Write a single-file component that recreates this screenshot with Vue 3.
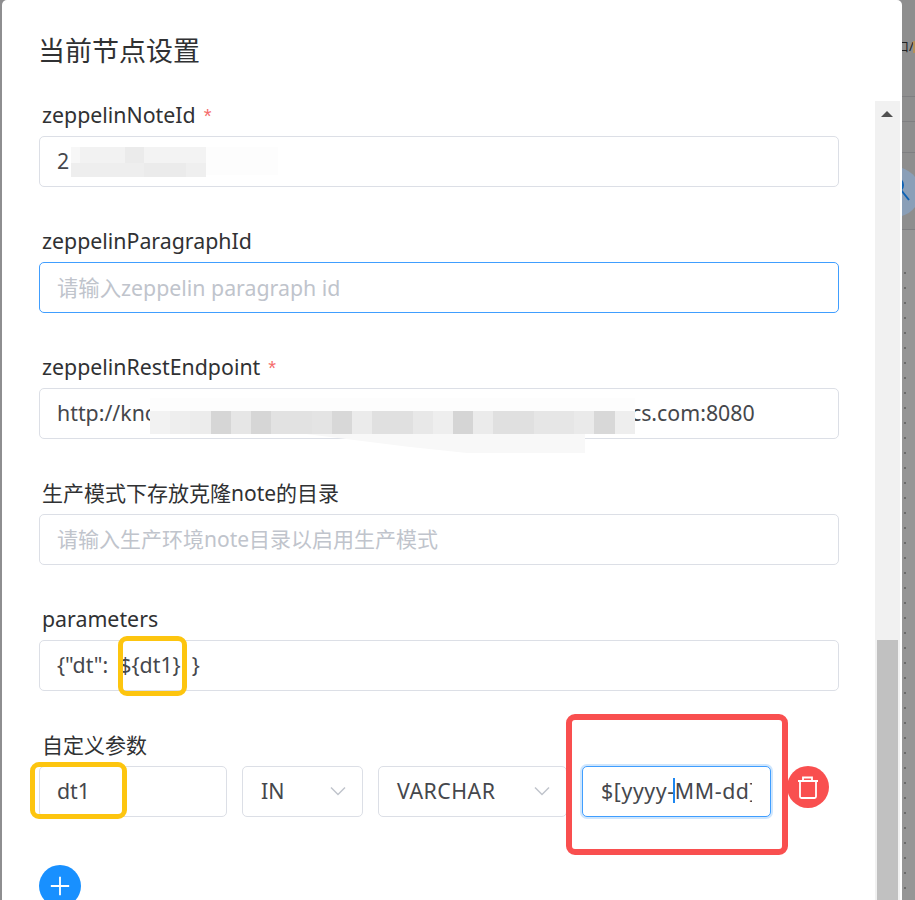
<template>
  <div class="page">
    <div class="modal">
      <div class="modal-title">当前节点设置</div>
      <div class="modal-body">
        <div class="form">
          <div v-for="f in fields" :key="f.label" class="form-item" :class="{ cjk: f.cjk }">
            <div class="label">
              {{ f.label }}<span v-if="f.required" class="star">*</span>
            </div>
            <input
              class="input"
              :class="{ focused: f.focused }"
              :value="f.value"
              :placeholder="f.placeholder"
            >
          </div>

          <div class="label cjk">自定义参数</div>
          <div class="param-row">
            <input class="input param-name" value="dt1">
            <div class="select select-dir">
              <span>IN</span>
              <svg class="chevron" viewBox="0 0 16 10"><path d="M1 1.5 8 8.5 15 1.5" /></svg>
            </div>
            <div class="select select-type">
              <span>VARCHAR</span>
              <svg class="chevron" viewBox="0 0 16 10"><path d="M1 1.5 8 8.5 15 1.5" /></svg>
            </div>
            <div class="param-value">
              <input class="input focused ring" value="$[yyyy-MM-dd]">
              <span class="caret"></span>
            </div>
            <button class="round-btn delete-btn">
              <svg viewBox="0 0 24 24" width="24" height="24">
                <path d="M2 6h20M7 6V2.5h9V6M4 6v15.5a1.5 1.5 0 0 0 1.5 1.5h13a1.5 1.5 0 0 0 1.5-1.5V6" />
              </svg>
            </button>
          </div>
          <button class="round-btn add-btn">
            <svg viewBox="0 0 24 24" width="22" height="22">
              <path d="M12 2v20M2 12h20" />
            </svg>
          </button>
        </div>

        <div class="scrollbar">
          <div class="arrow"></div>
          <div class="thumb"></div>
        </div>
      </div>
    </div>

    <div class="backdrop">
      <span class="bg-text">口/</span>
      <div class="bg-mark"></div>
      <div class="bg-line" v-for="y in [96, 121, 152, 229]" :key="y" :style="{ top: y + 'px' }"></div>
      <div class="bg-circle">
        <svg viewBox="0 0 50 50" width="50" height="50">
          <circle cx="26" cy="18" r="7" />
          <path d="M31 23 39 33" />
        </svg>
      </div>
      <div class="dots">
        <i v-for="n in 42" :key="n"></i>
      </div>
    </div>

    <!-- blurred out values -->
    <div class="blur blur-note"></div>
    <div class="blur blur-note-faint"></div>
    <div class="blur blur-url-top"></div>
    <div class="blur blur-url-low"></div>
    <div class="blur blur-url">
      <i v-for="(g, i) in urlTiles" :key="i" :style="{ background: g }"></i>
    </div>

    <!-- annotations drawn on the screenshot -->
    <div class="mark mark-yellow mark-param"></div>
    <div class="mark mark-yellow mark-name"></div>
    <div class="mark mark-red"></div>
  </div>
</template>

<script setup>
const fields = [
  { label: 'zeppelinNoteId', required: true, value: '2' },
  { label: 'zeppelinParagraphId', placeholder: '请输入zeppelin paragraph id', focused: true },
  { label: 'zeppelinRestEndpoint', required: true, value: 'http://knox..xxxxxxxxxxxxxxxxxxxxxxxxxxxxxxxxxxxxxxxxcs.com:8080' },
  { label: '生产模式下存放克隆note的目录', placeholder: '请输入生产环境note目录以启用生产模式', cjk: true },
  { label: 'parameters', value: '{"dt":  ${dt1}  }' }
]

const urlTiles = [
  '#f2f2f2', '#eeeeee', '#ececec', '#d6d6d6', '#e6e6e6', '#d6d6d6', '#e2e2e2', '#e2e2e2',
  '#e4e4e4', '#d8d8d8', '#ebebeb', '#e0e0e0', '#e0e0e0', '#e8e8e8', '#eeeeee', '#d5d5d5',
  '#ebebeb', '#e0e0e0', '#e0e0e0', '#e6e6e6', '#e6e6e6', '#eaeaea', '#d8d8d8', '#eeeeee'
]
</script>

<style>
html,
body {
  margin: 0;
  overflow: hidden;
}
</style>

<style scoped>
.page {
  position: relative;
  display: flex;
  width: 915px;
  height: 900px;
  padding-left: 2px;
  box-sizing: border-box;
  overflow: hidden;
  background: #8e8e90;
  font-family: "Noto Sans", "Noto Sans CJK SC", sans-serif;
  color: #303133;
}

.modal {
  flex: none;
  display: flex;
  flex-direction: column;
  width: 900px;
  height: 900px;
  background: #fff;
  border-radius: 5px 5px 0 0;
}

.modal-title {
  flex: none;
  height: 101px;
  padding-left: 36px;
  box-sizing: border-box;
  font-size: 27px;
  line-height: 102px;
}

.modal-body {
  flex: 1;
  display: flex;
  min-height: 0;
  padding-right: 2px;
}

.form {
  flex: 1;
  padding: 1px 0 0 37px;
  overflow: hidden;
}

.form-item {
  margin-bottom: 41px;
}

.label {
  height: 34px;
  font-size: 21.33px;
  line-height: 26px;
  padding-left: 3px;
  color: #303133;
}

.label.cjk,
.cjk .label,
.cjk .input {
  font-size: 21px;
}

.star {
  margin-left: 8px;
  font-family: "Liberation Sans", sans-serif;
  font-size: 20px;
  color: #f56c6c;
}

.input {
  display: block;
  width: 800px;
  height: 51px;
  padding: 0 17px 2px;
  box-sizing: border-box;
  border: 1px solid #dcdfe6;
  border-radius: 5px;
  outline: none;
  background: #fff;
  font: inherit;
  font-size: 21.33px;
  color: #45474c;
}

.input::placeholder {
  color: #c0c4cc;
}

.input.focused {
  border-color: #409eff;
  padding-bottom: 0;
}

.param-row {
  display: flex;
  gap: 15px;
  align-items: flex-start;
}

.input.param-name {
  width: 188px;
}

.select {
  display: flex;
  align-items: center;
  justify-content: space-between;
  height: 51px;
  padding: 0 16px 2px 18px;
  box-sizing: border-box;
  border: 1px solid #dcdfe6;
  border-radius: 5px;
  font-size: 21.33px;
  color: #45474c;
}

.select-dir {
  width: 121px;
}

.select-type {
  width: 189px;
  letter-spacing: 0.5px;
}

.chevron {
  width: 16px;
  height: 10px;
  fill: none;
  stroke: #c0c4cc;
  stroke-width: 1.5;
}

.param-value {
  position: relative;
  width: 189px;
}

.input.ring {
  width: 189px;
  padding: 0 18px 2px;
  letter-spacing: 0.6px;
  box-shadow: 0 0 0 2px #cfe6fd;
}

.caret {
  position: absolute;
  left: 91px;
  top: 12px;
  width: 2px;
  height: 25px;
  background: #1e87f0;
}

.round-btn {
  flex: none;
  display: flex;
  align-items: center;
  justify-content: center;
  width: 42px;
  height: 42px;
  padding: 0;
  border: none;
  border-radius: 50%;
}

.round-btn svg {
  fill: none;
  stroke: #fff;
}

.delete-btn {
  margin-left: 1px;
  background: #f94f4f;
}

.delete-btn svg {
  stroke-width: 1.8;
}

.add-btn {
  margin-top: 48px;
  background: #1890ff;
}

.add-btn svg {
  stroke-width: 2;
}

.scrollbar {
  position: relative;
  flex: none;
  width: 25px;
  background: #f1f1f1;
}

.arrow {
  position: absolute;
  left: 6px;
  top: 10px;
  border-left: 6px solid transparent;
  border-right: 6px solid transparent;
  border-bottom: 6px solid #505050;
}

.thumb {
  position: absolute;
  left: 2px;
  right: 2px;
  top: 539px;
  bottom: 0;
  background: #c1c1c1;
}

.backdrop {
  position: relative;
  flex: 1;
  overflow: hidden;
  background: linear-gradient(#8e8e8e 0 229px, #969696 229px);
}

.bg-text {
  position: absolute;
  left: -6px;
  top: 36px;
  font-size: 13px;
  line-height: 20px;
  white-space: nowrap;
  color: #222;
}

.bg-mark {
  position: absolute;
  right: 0;
  top: 41px;
  width: 2px;
  height: 12px;
  background: #b3915a;
}

.bg-line {
  position: absolute;
  left: 0;
  right: 0;
  height: 1px;
  background: #7f7f81;
}

.bg-circle {
  position: absolute;
  left: -32px;
  top: 167px;
  width: 50px;
  height: 50px;
  border-radius: 50%;
  background: #8a9fb8;
}

.bg-circle svg {
  display: block;
  fill: none;
  stroke: #0e62b4;
  stroke-width: 2;
}

.dots {
  position: absolute;
  left: 0;
  top: 272px;
  display: flex;
  flex-direction: column;
  gap: 13px;
  padding-left: 2px;
}

.dots i {
  display: block;
  width: 2px;
  height: 2px;
  background: #6c6c6c;
}

.blur {
  position: absolute;
  pointer-events: none;
}

.blur-note {
  left: 71px;
  top: 147px;
  width: 135px;
  height: 30px;
  filter: blur(0.4px);
  background:
    linear-gradient(90deg, #f7f7f7 0 7%, #f2f2f2 7% 40%, #ebebeb 40% 54%, #f3f3f3 54%) top / 100% 16px no-repeat,
    linear-gradient(90deg, #eeeeee 0 54%, #ebebeb 54% 85%, #efefef 85%) bottom / 100% 14px no-repeat;
}

.blur-note-faint {
  left: 206px;
  top: 147px;
  width: 72px;
  height: 28px;
  background: #fdfdfd;
}

.blur-url {
  left: 150px;
  top: 411px;
  display: flex;
  width: 485px;
  height: 23px;
  filter: blur(0.4px);
}

.blur-url i {
  flex: 1;
}

.blur-url-top {
  left: 150px;
  top: 398px;
  width: 485px;
  height: 13px;
  background: #fdfdfd;
}

.blur-url-low {
  left: 290px;
  top: 432px;
  width: 295px;
  height: 21px;
  background: #f8f8f8;
  clip-path: polygon(0 0, 100% 0, 100% 100%, 60% 100%, 40% 70%);
}

.mark {
  position: absolute;
  box-sizing: border-box;
  pointer-events: none;
}

.mark-yellow {
  border: 5px solid #fdc50f;
  border-radius: 9px;
}

.mark-param {
  left: 118px;
  top: 636px;
  width: 69px;
  height: 60px;
}

.mark-name {
  left: 30px;
  top: 762px;
  width: 97px;
  height: 57px;
}

.mark-red {
  left: 566px;
  top: 714px;
  width: 222px;
  height: 141px;
  border: 6px solid #f94f4f;
  border-radius: 9px;
}
</style>
